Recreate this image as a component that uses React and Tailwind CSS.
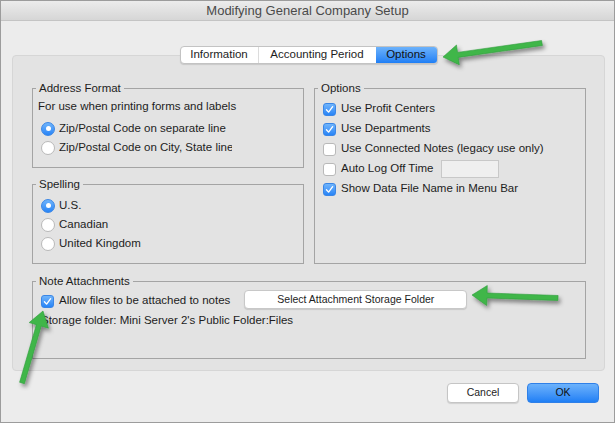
function Check({ on }) {
  if (on) {
    return (
      <span className="flex h-[13px] w-[13px] shrink-0 items-center justify-center rounded-[3px] border border-[#3a86e6] bg-gradient-to-b from-[#6fb4fb] to-[#2684f6]">
        <svg width="9" height="9" viewBox="0 0 10 10">
          <path d="M1.6 5.3 L4 7.9 L8.5 1.9" fill="none" stroke="white" strokeWidth="1.5" strokeLinecap="round" strokeLinejoin="round" />
        </svg>
      </span>
    );
  }
  return <span className="h-[13px] w-[13px] shrink-0 rounded-[3px] border border-[#b9b9b9] bg-white" />;
}

function Radio({ on }) {
  if (on) {
    return (
      <span className="flex h-[14px] w-[14px] shrink-0 items-center justify-center rounded-full border border-[#3a86e6] bg-gradient-to-b from-[#6fb4fb] to-[#2684f6]">
        <span className="h-[5px] w-[5px] rounded-full bg-white" />
      </span>
    );
  }
  return <span className="h-[14px] w-[14px] shrink-0 rounded-full border border-[#b9b9b9] bg-white" />;
}

function Group({ title, className, children }) {
  return (
    <div className={'relative border border-[#a4a4a4] ' + className}>
      <span className="absolute left-[3px] top-[-8px] bg-[#e3e3e3] px-[3px] leading-[14px]">{title}</span>
      {children}
    </div>
  );
}

// polygon for a green annotation arrow, tail -> tip
function arrowPoints([tx, ty], [hx, hy], headLen, headHalf, shaft) {
  const dx = hx - tx;
  const dy = hy - ty;
  const len = Math.hypot(dx, dy);
  const ux = dx / len;
  const uy = dy / len;
  const nx = -uy;
  const ny = ux;
  const bx = hx - ux * headLen;
  const by = hy - uy * headLen;
  const s = shaft / 2;
  const pts = [
    [tx + nx * s, ty + ny * s],
    [bx + nx * s, by + ny * s],
    [bx + nx * headHalf, by + ny * headHalf],
    [hx, hy],
    [bx - nx * headHalf, by - ny * headHalf],
    [bx - nx * s, by - ny * s],
    [tx - nx * s, ty - ny * s],
  ];
  return pts.map((p) => p.map((v) => v.toFixed(1)).join(',')).join(' ');
}

const arrows = [
  [[542, 43], [443, 57]],
  [[558, 298], [472, 295]],
  [[22, 383], [43, 311]],
];

export default function App() {
  return (
    <div className="relative flex h-[423px] w-[615px] flex-col overflow-hidden border border-[#9c9c9c] bg-[#ececec] font-['Liberation_Sans',Arial,sans-serif] text-[11.5px] text-[#1d1d1d]">
      <div className="flex h-[20px] shrink-0 items-center justify-center border-b border-[#c4c4c4] bg-gradient-to-b from-[#ececec] to-[#d6d6d6] text-[13px] text-[#4a4a4a]">
        Modifying General Company Setup
      </div>

      <div className="flex flex-col pt-[25px]">
        <div className="relative z-10 ml-[11px] flex w-[593px] justify-center">
          <div className="flex h-[18px] overflow-hidden rounded-[4px] border border-[#c3c3c3] bg-white shadow-[0_1px_1px_rgba(0,0,0,0.12)]">
            <div className="flex w-[78px] items-center justify-center border-r border-[#dcdcdc]">Information</div>
            <div className="flex w-[117px] items-center justify-center">Accounting Period</div>
            <div className="flex w-[61px] items-center justify-center bg-gradient-to-b from-[#6cb2fb] to-[#1e7ff5] text-[#111]">Options</div>
          </div>
        </div>

        <div className="-mt-[9px] ml-[11px] h-[316px] w-[593px] rounded-[4px] border border-[#d6d6d6] bg-[#e3e3e3] pl-[19px] pr-[18px] pt-[32px]">
          <div className="grid grid-cols-2 gap-x-[10px]">
            <div className="flex flex-col">
              <Group title="Address Format" className="h-[80px]">
                <div className="pl-[5px] pt-[8px] leading-[19px]">For use when printing forms and labels</div>
                <div className="mt-[3px] flex flex-col pl-[8px]">
                  <div className="flex h-[19px] items-center gap-[4px]">
                    <Radio on />
                    <span className="whitespace-nowrap">Zip/Postal Code on separate line</span>
                  </div>
                  <div className="flex h-[19px] items-center gap-[4px]">
                    <Radio />
                    <span className="w-[173px] overflow-hidden whitespace-nowrap">Zip/Postal Code on City, State line</span>
                  </div>
                </div>
              </Group>
              <Group title="Spelling" className="mt-[16px] h-[80px]">
                <div className="flex flex-col pl-[8px] pt-[11px]">
                  <div className="flex h-[19px] items-center gap-[4px]">
                    <Radio on />
                    <span>U.S.</span>
                  </div>
                  <div className="flex h-[19px] items-center gap-[4px]">
                    <Radio />
                    <span>Canadian</span>
                  </div>
                  <div className="flex h-[19px] items-center gap-[4px]">
                    <Radio />
                    <span>United Kingdom</span>
                  </div>
                </div>
              </Group>
            </div>

            <Group title="Options" className="h-[176px]">
              <div className="flex flex-col pl-[8px] pt-[10px]">
                <div className="flex h-[20px] items-center gap-[5px]">
                  <Check on />
                  <span>Use Profit Centers</span>
                </div>
                <div className="flex h-[20px] items-center gap-[5px]">
                  <Check on />
                  <span>Use Departments</span>
                </div>
                <div className="flex h-[20px] items-center gap-[5px]">
                  <Check />
                  <span>Use Connected Notes (legacy use only)</span>
                </div>
                <div className="flex h-[20px] items-center gap-[5px]">
                  <Check />
                  <span>Auto Log Off Time</span>
                  <span className="ml-[3px] h-[18px] w-[58px] border border-[#c8c8c8] bg-[#efefef]" />
                </div>
                <div className="flex h-[20px] items-center gap-[5px]">
                  <Check on />
                  <span>Show Data File Name in Menu Bar</span>
                </div>
              </div>
            </Group>
          </div>

          <Group title="Note Attachments" className="mt-[17px] h-[78px]">
            <div className="flex flex-col pl-[8px] pt-[9px]">
              <div className="flex h-[20px] items-center">
                <Check on />
                <span className="ml-[5px] whitespace-nowrap">Allow files to be attached to notes</span>
                <button className="-mt-[1px] ml-[14px] h-[19px] w-[223px] self-start rounded-[4px] border border-[#c8c8c8] bg-white text-[10.5px] shadow-[0_1px_1px_rgba(0,0,0,0.12)]">
                  Select Attachment Storage Folder
                </button>
              </div>
              <div className="flex h-[19px] items-center whitespace-nowrap">Storage folder: Mini Server 2's Public Folder:Files</div>
            </div>
          </Group>
        </div>

        <div className="mt-[12px] flex justify-end gap-[8px] pr-[15px]">
          <button className="h-[20px] w-[72px] rounded-[4px] border border-[#c5c5c5] bg-white text-[10.5px] shadow-[0_1px_1px_rgba(0,0,0,0.12)]">
            Cancel
          </button>
          <button className="h-[20px] w-[72px] rounded-[4px] border border-[#2f80e8] bg-gradient-to-b from-[#6cb2fb] to-[#1e7ff5] text-[10.5px] text-[#111]">
            OK
          </button>
        </div>
      </div>

      <svg className="pointer-events-none absolute left-[-1px] top-[-1px]" width="615" height="423">
        <defs>
          <filter id="shadow" x="-20%" y="-50%" width="140%" height="200%">
            <feDropShadow dx="2" dy="3" stdDeviation="2" floodColor="#000" floodOpacity="0.45" />
          </filter>
        </defs>
        {arrows.map(([tail, tip], i) => (
          <polygon
            key={i}
            points={arrowPoints(tail, tip, 15, 10, 5)}
            fill="#3fb64a"
            stroke="#2f9d3b"
            strokeWidth="0.6"
            strokeLinejoin="round"
            filter="url(#shadow)"
          />
        ))}
      </svg>
    </div>
  );
}
